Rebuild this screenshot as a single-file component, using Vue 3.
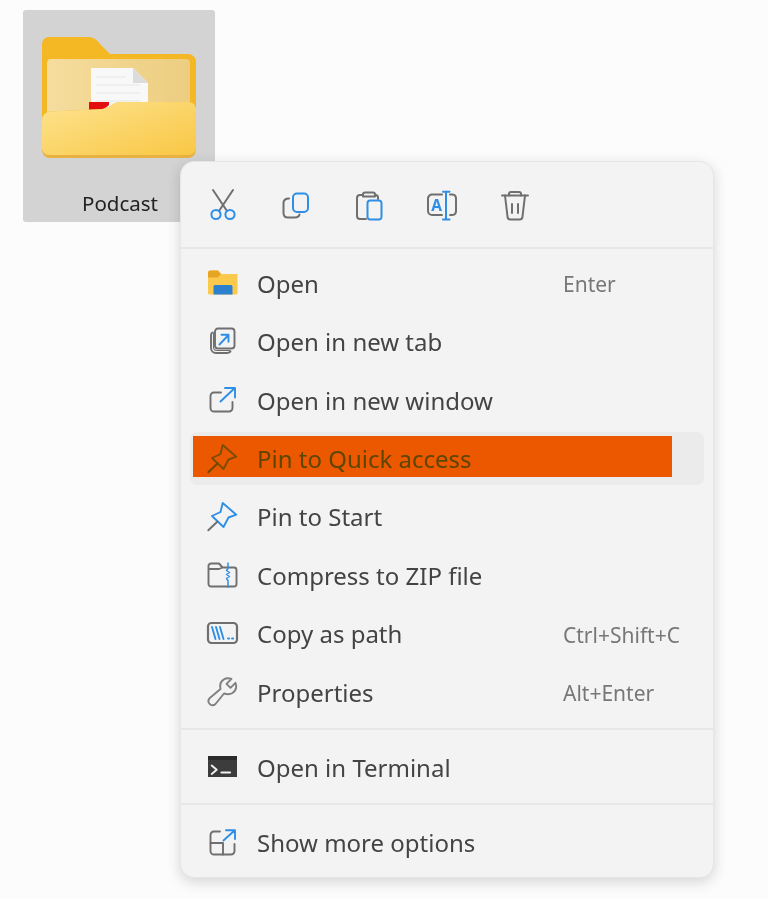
<script setup>
const G = '#6f6f6f'
const B = '#2f8fe6'
const pin = 'M15.7 1 29.3 12.7 21.5 15.5 16.5 25 5 14 13.5 10Z'

const tools = [
  { name: 'cut', shapes: [
    { d: 'M6-1 20 20', c: G }, { d: 'M26-1 12 20', c: G },
    { d: 'M13.6 23.5a4.6 4.6 0 1 1-9.2 0a4.600 4.600 0 1 1 9.200 0Z', c: B },
    { d: 'M27.6 23.5a4.6 4.6 0 1 1-9.2 0a4.600 4.600 0 1 1 9.200 0Z', c: B },
  ] },
  { name: 'copy', shapes: [
    { d: 'M9 7.5C5.5 7.5 3.5 9.5 3.5 12V22C3.5 25 5.5 26.5 8 26.5H15C17.5 26.5 19 25.5 19.5 23.5', c: G },
    { d: 'M17 2.5H24A4 4 0 0 1 28 6.5V17A4 4 0 0 1 24 21H17A4 4 0 0 1 13 17V6.5A4 4 0 0 1 17 2.5Z', c: B },
  ] },
  { name: 'paste', shapes: [
    { d: 'M10 4H7A3 3 0 0 0 4 7V25A3 3 0 0 0 7 28H13', c: G },
    { d: 'M22 4H22.5A2.5 2.5 0 0 1 25 6.5V8', c: G },
    { d: 'M10 5.5V3.5A2 2 0 0 1 12 1.5H20A2 2 0 0 1 22 3.5V5.5Z', c: G },
    { d: 'M17 9.5H26A2.5 2.5 0 0 1 28.5 12V26A2.5 2.5 0 0 1 26 28.5H17A2.5 2.5 0 0 1 14.5 26V12A2.5 2.5 0 0 1 17 9.5Z', c: B },
  ] },
  { name: 'rename', letter: 'A', shapes: [
    { d: 'M15 3.5H5A4 4 0 0 0 1 7.5V20A4 4 0 0 0 5 24H15', c: G },
    { d: 'M23 3.5H25.5A4 4 0 0 1 29 7.5V20A4 4 0 0 1 25.5 24H23', c: G },
    { d: 'M19 .8V28.5M16 .8H22.5M16 28.5H22.5', c: B },
  ] },
  { name: 'delete', shapes: [
    { d: 'M2 4.5H28', c: G },
    { d: 'M9 4.5V3A2 2 0 0 1 11 1H19A2 2 0 0 1 21 3V4.5', c: G },
    { d: 'M5 4.5 7.5 25.5A3 3 0 0 0 10.5 28.5H19.5A3 3 0 0 0 22.5 25.5L25 4.5', c: G },
    { d: 'M12 13V22M18 13V22', c: G },
  ] },
]

const main = [
  { label: 'Open', key: 'Enter', shapes: [
    { d: 'M1 5A2.5 2.5 0 0 1 3.5 2.5H11L14 6H30.5V25A1.5 1.5 0 0 1 29 26.5H2.5A1.5 1.5 0 0 1 1 25Z', f: '#fbca4c' },
    { d: 'M1 5A2.5 2.5 0 0 1 3.5 2.5H11L14 6 11 9.5H1Z', f: '#e7a525' },
    { d: 'M8 17H24A1.5 1.5 0 0 1 25.5 18.5V26.5H6.5V18.5A1.5 1.5 0 0 1 8 17Z', f: '#2b80cf' },
  ] },
  { label: 'Open in new tab', shapes: [
    { d: 'M11 1.5H24.5A3 3 0 0 1 27.5 4.5V18.5A3 3 0 0 1 24.5 21.5H11A3 3 0 0 1 8 18.5V4.5A3 3 0 0 1 11 1.5Z', c: G },
    { d: 'M5.5 5.5C4.5 6 4 7 4 8V21A5 5 0 0 0 9 26H20C21.5 26 22.5 25.5 23.5 24.5', c: G },
    { d: 'M8 4.5C7 5 6.5 6 6.5 7V20A3.5 3.5 0 0 0 10 23.5H23', c: G, w: 1.1 },
    { d: 'M12.5 17.5 21 8.5M14.5 7.8H21.5V14.8', c: B },
  ] },
  { label: 'Open in new window', shapes: [
    { d: 'M14 7.5H7A3.5 3.5 0 0 0 3.5 11V23A3.5 3.5 0 0 0 7 26.5H22A3.5 3.5 0 0 0 25.5 23V17', c: G },
    { d: 'M13.5 16.5 27.5 3.2M18 3H28V12.5', c: B },
  ] },
  { label: 'Pin to Quick access', active: true, shapes: [
    { d: pin, c: '#7a4d00' }, { d: 'M1.3 28.3 10.5 19.5', c: '#6b4a00' },
  ] },
  { label: 'Pin to Start', shapes: [
    { d: pin, c: B }, { d: 'M1.3 28.3 10.5 19.5', c: G },
  ] },
  { label: 'Compress to ZIP file', shapes: [
    { d: 'M1.5 6A2.5 2.5 0 0 1 4 3.5H12L15.5 7.5H27A2.5 2.5 0 0 1 29.5 10V24A2.5 2.5 0 0 1 27 26.5H4A2.5 2.5 0 0 1 1.5 24ZM1.5 9H12L15.5 7.5', c: G },
    { d: 'M21 3V8.5L19.5 10.5 22.5 12.5 19.5 14.5 22.5 16.5 19.5 18.5 21 20.5V27', c: B, w: 1.5 },
  ] },
  { label: 'Copy as path', key: 'Ctrl+Shift+C', shapes: [
    { d: 'M4.5 4H26.5A3.5 3.5 0 0 1 30 7.5V20.5A3.5 3.5 0 0 1 26.5 24H4.5A3.5 3.5 0 0 1 1 20.5V7.5A3.5 3.5 0 0 1 4.5 4Z', c: G, w: 2.2 },
    { d: 'M5 8 8.5 20M9 8 12.5 20M13 8 16.5 20', c: B },
    { d: 'M21 19.5H22.2M25 19.5H26.2', c: B, w: 1.8 },
  ] },
  { label: 'Properties', key: 'Alt+Enter', shapes: [
    { d: 'M24.5 1.8 19.5 6.8 23.5 10.8 28.5 5.8C30 10 28.5 14 25.5 16C23 17.5 20 17.5 17 16.5L8.5 27C6.5 28.8 4 28.6 2.8 27C1.2 25.5 1.2 23 2.5 21.3L13.5 12C12.5 7.5 14 4 17 2.3C19 1 22 1 24.5 1.8Z', c: '#808080' },
  ] },
]

const terminal = [
  { label: 'Open in Terminal', shapes: [
    { d: 'M1 4H30V25H1Z', f: '#3c3c3c' },
    { d: 'M1 4H30V8H1Z', f: '#2a2a2a' },
    { d: 'M4.7 13.5 9.7 17.8 4.7 22', c: '#f2f2f2' },
    { d: 'M14.5 20.5H23', c: '#f2f2f2', w: 2.2 },
  ] },
]

const more = [
  { label: 'Show more options', shapes: [
    { d: 'M13 3.5H7A3.5 3.5 0 0 0 3.5 7V23A3.5 3.5 0 0 0 7 26.5H24A3.5 3.5 0 0 0 27.5 23V16', c: G },
    { d: 'M3.5 15H16V26.5', c: G },
    { d: 'M16.5 12.5 27.5 2.5M19 2.3H28V11', c: B },
  ] },
]

const sections = [main, terminal, more]
</script>

<template>
  <div class="desktop">
    <div class="tile">
      <svg class="folder" width="154" height="121" viewBox="0 0 154 121">
        <defs>
          <linearGradient id="panel" x1="0" y1="0" x2="1" y2="0">
            <stop offset="0" stop-color="#f6dd9e" />
            <stop offset="1" stop-color="#eccd80" />
          </linearGradient>
          <linearGradient id="front" x1="0" y1="0" x2="1" y2="1">
            <stop offset="0" stop-color="#fde38f" />
            <stop offset="1" stop-color="#f9c744" />
          </linearGradient>
        </defs>
        <path d="M0 7A7 7 0 0 1 7 0H46C52 0 55 3 58 7L68 17H146A8 8 0 0 1 154 25V80H0Z" fill="#f3b823" />
        <path d="M5 26A4 4 0 0 1 9 22H144A4 4 0 0 1 148 26V80H5Z" fill="url(#panel)" />
        <path d="M49 31H91L106 46V70H49Z" fill="#f8f8f8" />
        <path d="M91 31 106 46H91Z" fill="#dcdcdc" />
        <path d="M54 40H84M54 48H98M54 56H98M54 64H98" stroke="#ececec" stroke-width="1.5" />
        <path d="M47 65H67V68C63 72 55 74 47 74Z" fill="#e30f0f" />
        <path d="M0 84C0 79 3 75 8 74.5L62 72C66 71.5 68 69 72 66.5C74 65.5 76 65 78 65H146C151 65 154 68 154 73V112C154 117 151 121 146 121H8C3 121 0 117 0 112Z" fill="#e8b243" />
        <path d="M0 84C0 79 3 75 8 74.5L62 72C66 71.5 68 69 72 66.5C74 65.5 76 65 78 65H146C151 65 154 68 154 73V110C154 115 151 118 146 118H8C3 118 0 115 0 110Z" fill="url(#front)" />
      </svg>
      <span class="tile-label">Podcast</span>
    </div>

    <div class="menu">
      <div class="toolbar">
        <div v-for="tool in tools" :key="tool.name" class="tool">
          <svg class="icon" width="30" height="30" viewBox="0 0 30 30">
            <path
              v-for="(s, i) in tool.shapes"
              :key="i"
              :d="s.d"
              :fill="s.f || 'none'"
              :stroke="s.c || 'none'"
              :stroke-width="s.w || 2"
              stroke-linecap="round"
              stroke-linejoin="round"
            />
            <text v-if="tool.letter" class="glyph" x="9.5" y="19.5" text-anchor="middle">{{ tool.letter }}</text>
          </svg>
        </div>
      </div>

      <div v-for="(section, n) in sections" :key="n" class="section">
        <div v-for="item in section" :key="item.label" class="row" :class="{ active: item.active }">
          <svg class="icon" width="31" height="30" viewBox="0 0 31 30">
            <path
              v-for="(s, i) in item.shapes"
              :key="i"
              :d="s.d"
              :fill="s.f || 'none'"
              :stroke="s.c || 'none'"
              :stroke-width="s.w || 1.9"
              stroke-linecap="round"
              stroke-linejoin="round"
            />
          </svg>
          <span class="label">{{ item.label }}</span>
          <span class="key">{{ item.key }}</span>
        </div>
      </div>
    </div>
  </div>
</template>

<style>
html, body { background: #fcfcfc; }
</style>

<style scoped>
.desktop {
  position: relative;
  width: 768px;
  height: 898px;
  overflow: hidden;
  padding: 10px 0 0 23px;
  box-sizing: border-box;
  background: #fcfcfc;
  font-family: "Noto Sans", sans-serif;
  filter: blur(0.45px);
}
.tile {
  width: 192px;
  height: 212px;
  box-sizing: border-box;
  padding-top: 27px;
  background: #d3d3d3;
  border-radius: 3px;
  display: flex;
  flex-direction: column;
  align-items: center;
}
.folder { display: block; flex: none; }
.tile-label {
  margin-top: 32px;
  margin-left: 2px;
  font-size: 20.5px;
  line-height: 26px;
  color: #222;
}
.menu {
  position: absolute;
  left: 180px;
  top: 161px;
  width: 534px;
  height: 717px;
  box-sizing: border-box;
  background: #f3f3f3;
  border: 1px solid #e6e6e6;
  border-radius: 14px;
  box-shadow: 0 4px 14px rgba(0, 0, 0, 0.16);
}
.toolbar {
  display: flex;
  height: 85px;
  padding-left: 4px;
  align-items: center;
}
.tool {
  width: 73.3px;
  display: flex;
  justify-content: center;
  padding-top: 2px;
}
.icon { display: block; overflow: visible; flex: none; }
.glyph {
  font-family: "Noto Sans", sans-serif;
  font-weight: 700;
  font-size: 15.5px;
  fill: #2f8fe6;
}
.section {
  padding: 5px 0 6.4px;
  border-top: 2px solid #e7e7e7;
}
.section + .section { padding: 8px 0 7px; }
.section:last-child { padding: 8px 0 4px; }
.row {
  position: relative;
  height: 58.45px;
  display: grid;
  grid-template-columns: 31px 305px 1fr;
  align-items: center;
  padding-left: 25.5px;
  font-size: 24px;
  color: #444;
}
.row .label { margin-left: 19.5px; white-space: nowrap; position: relative; }
.row .key { margin: 2px 0 0 20.5px; font-size: 21px; color: #777; white-space: nowrap; position: relative; }
.row .icon { position: relative; }
.row.active::before {
  content: "";
  position: absolute;
  left: 9px;
  right: 9px;
  top: 3px;
  bottom: 3px;
  background: #ebebeb;
  border-radius: 7px;
}
.row.active::after {
  content: "";
  position: absolute;
  left: 12px;
  width: 479px;
  top: 6.5px;
  height: 41px;
  background: #ec5800;
  z-index: 0;
}
.row.active .icon, .row.active .label { z-index: 1; }
.row.active .label { color: #5e4500; }
</style>
